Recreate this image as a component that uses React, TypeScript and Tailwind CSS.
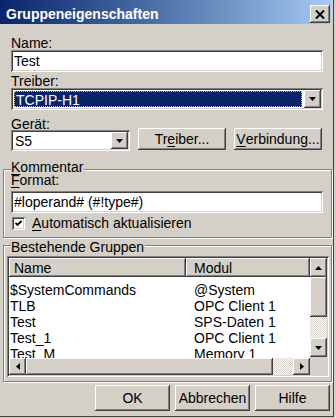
import React from "react";

const raised =
  "bg-[#d4d0c8] shadow-[inset_-1px_-1px_0_#404040,inset_1px_1px_0_#ffffff,inset_-2px_-2px_0_#808080,inset_2px_2px_0_#d4d0c8]";
const sunken =
  "shadow-[inset_1px_1px_0_#808080,inset_-1px_-1px_0_#ffffff,inset_2px_2px_0_#404040,inset_-2px_-2px_0_#d4d0c8]";
const checker =
  "bg-[repeating-conic-gradient(#d4d0c8_0%_25%,#ffffff_0%_50%)] bg-[length:2px_2px]";

function Arrow({ dir }: { dir: "up" | "down" | "left" | "right" }) {
  const pts: Record<string, string> = {
    down: "0,0 7,0 3.5,4",
    up: "0,4 7,4 3.5,0",
    left: "4,0 4,7 0,3.5",
    right: "0,0 0,7 4,3.5",
  };
  const horiz = dir === "left" || dir === "right";
  return (
    <svg width={horiz ? 4 : 7} height={horiz ? 7 : 4} viewBox={horiz ? "0 0 4 7" : "0 0 7 4"}>
      <polygon points={pts[dir]} fill="#000" />
    </svg>
  );
}

function U({ children }: { children: React.ReactNode }) {
  return <span className="underline decoration-1 underline-offset-[2px]">{children}</span>;
}

const rows = [
  ["$SystemCommands", "@System"],
  ["TLB", "OPC Client 1"],
  ["Test", "SPS-Daten 1"],
  ["Test_1", "OPC Client 1"],
  ["Test_M", "Memory 1"],
];

export default function App() {
  return (
    <div className="w-[336px] h-[418px] bg-[#d4d0c8] overflow-hidden text-[14px] leading-[16px] text-black font-['Liberation_Sans',Arial,sans-serif]">
      <div className="w-[334px] h-[417px] border-r border-b border-[#404040] flex flex-col">
        {/* Title bar */}
        <div className="w-[331px] h-[24px] shrink-0 bg-gradient-to-r from-[#0a246a] to-[#a6caf0] flex items-start justify-between pl-[6px] pr-[1px]">
          <span className="mt-[6px] font-bold text-white">Gruppeneigenschaften</span>
          <div className={`mt-[5px] w-[20px] h-[18px] flex items-center justify-center ${raised}`}>
            <svg width="10" height="9" viewBox="0 0 10 9">
              <path d="M1 0.5 L9 8.5 M9 0.5 L1 8.5" stroke="#000" strokeWidth="2" />
            </svg>
          </div>
        </div>

        {/* Body */}
        <div className="px-[11px] flex flex-col">
          <div className="mt-[13px] h-[13px] leading-[13px]">Name:</div>
          <div className={`w-[312px] h-[22px] bg-white pl-[3px] pt-[3px] ${sunken}`}>Test</div>

          <div className="mt-[3px] h-[13px] leading-[13px]">Treiber:</div>
          <div className={`w-[312px] h-[22px] bg-white flex items-stretch p-[2px] ${sunken}`}>
            <div className="flex-1 ml-[1px] my-[1px] mr-[2px] bg-[#0a246a] border border-dotted border-[#b8b8b8] text-white pl-[1px] pt-[1px] leading-[15px]">
              TCPIP-H1
            </div>
            <div className={`w-[17px] flex items-center justify-center ${raised}`}>
              <Arrow dir="down" />
            </div>
          </div>

          <div className="flex items-end">
            <div className="flex flex-col">
              <div className="mt-[8px] h-[12px] leading-[13px]">Gerät:</div>
              <div className={`w-[119px] h-[21px] bg-white flex items-stretch p-[2px] ${sunken}`}>
                <div className="flex-1 pl-[2px] pt-[1px]">S5</div>
                <div className={`w-[17px] flex items-center justify-center ${raised}`}>
                  <Arrow dir="down" />
                </div>
              </div>
            </div>
            <div className={`ml-[8px] mb-[1px] w-[89px] h-[22px] flex items-center justify-center ${raised}`}>
              Tr<U>e</U>iber...
            </div>
            <div className={`ml-[8px] mb-[1px] w-[89px] h-[22px] flex items-center justify-center ${raised}`}>
              <U>V</U>erbindung...
            </div>
          </div>
        </div>

        {/* Kommentar group */}
        <div className="ml-[3px] mt-[18px] w-[329px] h-[69px] border border-[#808080] shadow-[1px_1px_0_#ffffff,inset_1px_1px_0_#ffffff] flex flex-col pl-[7px]">
          <div className="-mt-[9px] h-[13px] leading-[13px] w-fit bg-[#d4d0c8] pr-[1px]">
            <U>K</U>ommentar
          </div>
          <div className="h-[13px] leading-[13px]">
            <U>F</U>ormat:
          </div>
          <div className={`mt-[4px] w-[312px] h-[22px] bg-white pl-[3px] pt-[3px] ${sunken}`}>#loperand# (#!type#)</div>
          <div className="mt-[2px] h-[16px] flex items-center">
            <div className={`ml-[1px] w-[13px] h-[13px] bg-white flex items-center justify-center ${sunken}`}>
              <svg width="7" height="7" viewBox="0 0 7 7">
                <path d="M0.5 3 L2.5 5 L6.5 1" stroke="#000" strokeWidth="1.8" fill="none" />
              </svg>
            </div>
            <span className="ml-[7px]">
              <U>A</U>utomatisch aktualisieren
            </span>
          </div>
        </div>

        {/* Bestehende Gruppen group */}
        <div className="ml-[3px] mt-[7px] w-[329px] h-[137px] border border-[#808080] shadow-[1px_1px_0_#ffffff,inset_1px_1px_0_#ffffff] flex flex-col pl-[7px]">
          <div className="-mt-[5px] h-[13px] leading-[13px] w-fit bg-[#d4d0c8] pr-[1px]">Bestehende Gruppen</div>
          <div className={`-ml-[4px] mt-[2px] w-[322px] h-[121px] bg-white p-[2px] ${sunken}`}>
            <div className="flex h-[117px]">
              <div className="w-[301px] flex flex-col">
                <div className="flex h-[19px] shrink-0">
                  <div className={`w-[177px] pl-[5px] pt-[2px] ${raised}`}>Name</div>
                  <div className={`w-[124px] pl-[8px] pt-[2px] ${raised}`}>Modul</div>
                </div>
                <div className="h-[81px] overflow-hidden pt-[5px] flex flex-col">
                  {rows.map(([n, m]) => (
                    <div key={n} className="flex h-[16px] shrink-0">
                      <div className="w-[177px] pl-[1px]">{n}</div>
                      <div className="w-[124px] pl-[8px]">{m}</div>
                    </div>
                  ))}
                </div>
                <div className="flex h-[17px] shrink-0">
                  <div className={`w-[17px] flex items-center justify-center ${raised}`}>
                    <Arrow dir="left" />
                  </div>
                  <div className={`w-[247px] ${raised}`} />
                  <div className={`w-[20px] ${checker}`} />
                  <div className={`w-[17px] flex items-center justify-center ${raised}`}>
                    <Arrow dir="right" />
                  </div>
                </div>
              </div>
              <div className="w-[17px] flex flex-col">
                <div className={`h-[19px] flex items-center justify-center ${raised}`}>
                  <Arrow dir="up" />
                </div>
                <div className={`h-[40px] ${raised}`} />
                <div className={`h-[21px] ${checker}`} />
                <div className={`h-[19px] flex items-center justify-center ${raised}`}>
                  <Arrow dir="down" />
                </div>
                <div className="h-[18px] bg-[#d4d0c8]" />
              </div>
            </div>
          </div>
        </div>

        {/* Buttons */}
        <div className="mt-[3px] ml-[95px] flex gap-[5px]">
          <div className={`w-[75px] h-[26px] flex items-center justify-center ${raised}`}>OK</div>
          <div className={`w-[75px] h-[26px] flex items-center justify-center ${raised}`}>Abbrechen</div>
          <div className={`w-[75px] h-[26px] flex items-center justify-center ${raised}`}>Hilfe</div>
        </div>
      </div>
    </div>
  );
}
